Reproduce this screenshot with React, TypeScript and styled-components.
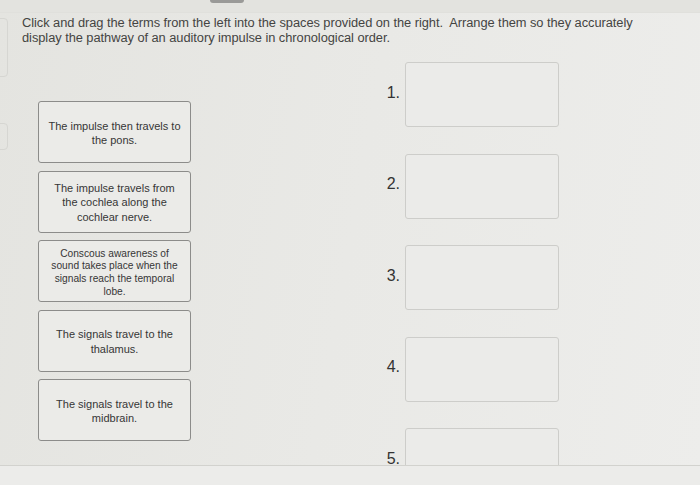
import React from 'react';
import styled, { createGlobalStyle } from 'styled-components';

const GlobalStyle = createGlobalStyle`
    html, body {
        margin: 0;
        padding: 0;
    }
    body {
        font-family: "Liberation Sans", Arial, sans-serif;
        background: #e7e7e3;
    }
`;

const terms = [
    { lines: ['The impulse then travels to', 'the pons.'] },
    { lines: ['The impulse travels from', 'the cochlea along the', 'cochlear nerve.'] },
    { lines: ['Conscous awareness of', 'sound takes place when the', 'signals reach the temporal', 'lobe.'], small: true },
    { lines: ['The signals travel to the', 'thalamus.'] },
    { lines: ['The signals travel to the', 'midbrain.'] },
];

const slots = [1, 2, 3, 4, 5];

const App = () => {
    return (<Page>
        <GlobalStyle />
        <TopStrip>
            <Tab />
        </TopStrip>

        <Body>
            <Gutter>
                <GutterBox height={57} top={5} />
                <GutterBox height={25} top={46} />
            </Gutter>

            <Main>
                <Instructions>
                    Click and drag the terms from the left into the spaces provided on the right.&nbsp; Arrange them so they accurately
                    <br />
                    display the pathway of an auditory impulse in chronological order.
                </Instructions>

                <Columns>
                    <TermList>
                        {terms.map((t, i) => (
                            <TermCard key={i} small={t.small}>
                                <span>
                                    {t.lines.map((l, j) => (
                                        <React.Fragment key={j}>
                                            {l}
                                            {j < t.lines.length - 1 && <br />}
                                        </React.Fragment>
                                    ))}
                                </span>
                            </TermCard>
                        ))}
                    </TermList>

                    <SlotList>
                        {slots.map(n => (
                            <SlotRow key={n}>
                                <SlotNumber>{n}.</SlotNumber>
                                <DropBox />
                            </SlotRow>
                        ))}
                    </SlotList>
                </Columns>
            </Main>
        </Body>

        <Footer />
    </Page>);
}

export default App;

const Page = styled.div`
    width: 700px;
    height: 485px;
    overflow: hidden;
    display: flex;
    flex-direction: column;
    background: linear-gradient(100deg, #e4e4e0 0%, #e9e9e6 50%, #ededeb 100%);
    color: #3a3a3a;
`;

const TopStrip = styled.div`
    height: 12px;
    flex: none;
    border-bottom: 1px solid #e0e0dc;
    background: #e3e3df;
`;

const Tab = styled.div`
    margin-left: 210px;
    width: 34px;
    height: 3px;
    background: #9a9a98;
    border-radius: 0 0 3px 3px;
`;

const Body = styled.div`
    flex: 1;
    display: flex;
    min-height: 0;
`;

const Gutter = styled.div`
    width: 8px;
    flex: none;
    display: flex;
    flex-direction: column;
`;

const GutterBox = styled.div`
    margin-top: ${props => props.top}px;
    height: ${props => props.height}px;
    margin-left: -6px;
    width: 12px;
    border: 1px solid #d6d6d2;
    border-radius: 4px;
`;

const Main = styled.div`
    flex: 1;
    display: flex;
    flex-direction: column;
    min-height: 0;
`;

const Instructions = styled.p`
    margin: 2px 0 0 14px;
    font-size: 12.85px;
    line-height: 15px;
    color: #444442;
    letter-spacing: -0.05px;
`;

const Columns = styled.div`
    flex: 1;
    min-height: 0;
    overflow: hidden;
    display: flex;
    align-items: flex-start;
    padding: 17px 0 0 30px;
`;

const TermList = styled.div`
    width: 153px;
    margin-top: 39px;
    display: flex;
    flex-direction: column;
    gap: 7.5px;
`;

const TermCard = styled.div`
    height: 62px;
    box-sizing: border-box;
    border: 1px solid #8c8c8a;
    border-radius: 3px;
    background: #ebebe8;
    display: flex;
    align-items: center;
    justify-content: center;
    text-align: center;
    font-size: ${props => props.small ? '10.2px' : '11px'};
    line-height: ${props => props.small ? '12.7px' : '14.5px'};
    color: #363636;
    padding-top: ${props => props.small ? '4px' : '2px'};
`;

const SlotList = styled.div`
    margin-left: 189px;
    display: flex;
    flex-direction: column;
    gap: 26.5px;
`;

const SlotRow = styled.div`
    display: flex;
    align-items: center;
    gap: 5px;
`;

const SlotNumber = styled.span`
    width: 20px;
    text-align: right;
    font-size: 16px;
    line-height: 18px;
    color: #333;
    margin-top: -4px;
`;

const DropBox = styled.div`
    width: 154px;
    height: 65px;
    box-sizing: border-box;
    border: 1px solid #cdcdca;
    border-radius: 3px;
    background: #ebebe9;
`;

const Footer = styled.div`
    height: 19px;
    flex: none;
    border-top: 1px solid #d2d2ce;
    background: #ececea;
`;
